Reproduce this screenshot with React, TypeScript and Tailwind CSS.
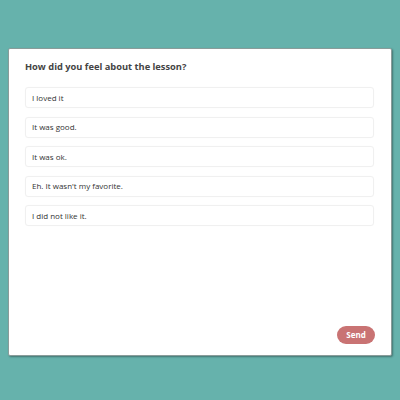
const options = [
  "I loved it",
  "It was good.",
  "It was ok.",
  "Eh. It wasn't my favorite.",
  "I did not like it.",
];

export default function App() {
  return (
    <div className="w-[400px] h-[400px] bg-[#66b2ac] pt-[48px] px-[8px] font-['Open_Sans',sans-serif]">
      <div className="h-[308px] bg-white rounded-[2px] border border-[#8a9c9a] shadow-[1px_1px_2px_rgba(0,0,0,0.35)] px-[16px] pt-[11px] pb-[11px] flex flex-col">
        <h1 className="text-[9.3px] font-bold text-[#444] leading-[14px] mb-[13px]">
          How did you feel about the lesson?
        </h1>
        <div className="flex flex-col gap-[8.5px] pr-[1px]">
          {options.map((o) => (
            <div
              key={o}
              className="h-[21px] border border-[#f0f0f0] rounded-[3px] px-[6px] flex items-center text-[8px] text-[#333] shadow-[0_0_1px_rgba(0,0,0,0.04)]"
            >
              {o}
            </div>
          ))}
        </div>
        <div className="mt-auto flex justify-end">
          <button className="w-[38px] h-[18px] rounded-full bg-[#c97373] text-white text-[8px] font-bold">
            Send
          </button>
        </div>
      </div>
    </div>
  );
}
